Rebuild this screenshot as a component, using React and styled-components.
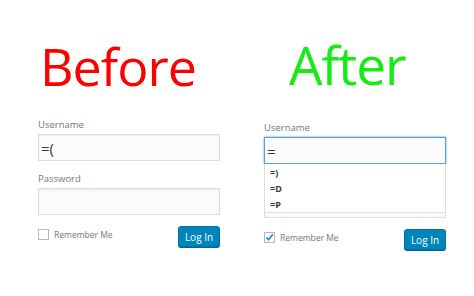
import styled, { createGlobalStyle } from 'styled-components';

const Global = createGlobalStyle`
body{
    margin:0;
    background:#ffffff;
    font-family:'Open Sans', 'Liberation Sans', sans-serif;
}
`

const suggestions = ['=)', '=D', '=P'];

function Check({ checked }) {
    return (
        <Box>
            {checked && (
                <svg width="11" height="11" viewBox="0 0 11 11">
                    <path d="M1.8 5.6 L4.3 8.2 L9.6 1.6" fill="none" stroke="#1e8cbe" strokeWidth="1.9" />
                </svg>
            )}
        </Box>
    )
}

function LoginForm({ title, color, size, indent, top, gap, value, dropdown, remember }) {
    return (
        <Panel $top={top}>
            <Title $color={color} $size={size} $indent={indent} $gap={gap}>{title}</Title>
            <Label>Username</Label>
            <Field>
                <Input readOnly value={value} $focus={dropdown} />
                {dropdown && (
                    <Dropdown>
                        {suggestions.map((s) => <Item key={s}>{s}</Item>)}
                    </Dropdown>
                )}
            </Field>
            {/* covered by the suggestion list when it is open */}
            <Label $space $covered={dropdown}>Password</Label>
            <Input readOnly type="password" value="" />
            <Bottom>
                <Remember>
                    <Check checked={remember} />
                    <span>Remember Me</span>
                </Remember>
                <Button>Log In</Button>
            </Bottom>
        </Panel>
    )
}

export default function App() {
    return (
        <>
            <Global />
            <Page>
                <LoginForm title="Before" color="#ff0000" size={52} indent={2} top={36} gap={23} value="=(" />
                <LoginForm title="After" color="#14ec14" size={53} indent={25} top={35} gap={27} value="=" dropdown remember />
            </Page>
        </>
    )
}

const Page = styled.div`
display:flex;
align-items:flex-start;
gap:44px;
padding-left:38px;
width:474px;
height:296px;
box-sizing:border-box;
`
const Panel = styled.div`
width:182px;
display:flex;
flex-direction:column;
padding-top:${p => p.$top}px;
`
const Title = styled.div`
height:60px;
line-height:60px;
font-size:${p => p.$size}px;
letter-spacing:-1px;
color:${p => p.$color};
padding-left:${p => p.$indent}px;
margin-bottom:${p => p.$gap}px;
white-space:nowrap;
`
const Label = styled.div`
font-size:9.5px;
line-height:12px;
color:#72777c;
margin-top:${p => p.$space ? '12px' : '0'};
margin-bottom:3px;
visibility:${p => p.$covered ? 'hidden' : 'visible'};
`
const Field = styled.div`
position:relative;
`
const Input = styled.input`
display:block;
width:182px;
height:27px;
box-sizing:border-box;
margin:0;
padding:0 2px;
font-family:'Open Sans', 'Liberation Sans', sans-serif;
font-size:15px;
color:#32373c;
background:#fbfbfb;
border:1px solid ${p => p.$focus ? '#5b9dd9' : '#dddddd'};
box-shadow:${p => p.$focus ? '0 0 2px rgba(30,140,190,.8)' : 'inset 0 1px 2px rgba(0,0,0,.07)'};
outline:none;
`
const Dropdown = styled.div`
position:absolute;
top:100%;
left:0;
right:0;
height:49px;
box-sizing:border-box;
padding-top:1px;
background:#ffffff;
border:1px solid #dddddd;
border-top:none;
z-index:2;
`
const Item = styled.div`
height:16px;
line-height:16px;
padding-left:5px;
font-size:9px;
font-weight:700;
color:#32373c;
`
const Bottom = styled.div`
display:flex;
justify-content:space-between;
align-items:flex-start;
margin-top:11px;
`
const Remember = styled.label`
display:flex;
align-items:center;
gap:5px;
margin-top:3px;
font-size:8.5px;
color:#72777c;
`
const Box = styled.span`
display:flex;
align-items:center;
justify-content:center;
width:11px;
height:11px;
box-sizing:border-box;
border:1px solid #b4b9be;
background:#ffffff;
`
const Button = styled.button`
width:42px;
height:21px;
padding:0;
font-family:'Open Sans', 'Liberation Sans', sans-serif;
font-size:10px;
color:#ffffff;
background:#0085ba;
border:1px solid #0073aa;
border-radius:3px;
box-shadow:0 1px 0 #006799;
`
